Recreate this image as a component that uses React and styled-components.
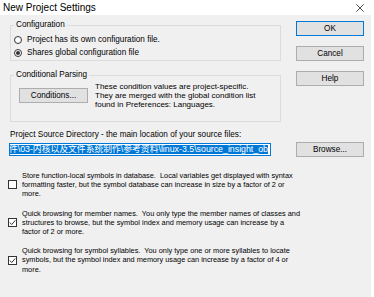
import React from "react";
import styled, { createGlobalStyle } from "styled-components";

const GlobalStyle = createGlobalStyle`
  html, body {
    margin: 0;
    padding: 0;
    background: #fff;
  }
  body {
    font-family: "Liberation Sans", Arial, sans-serif;
    font-size: 8.2px;
    color: #000;
  }
`;

const Window = styled.div`
  width: 371px;
  height: 297px;
  background: #f0f0f0;
  display: flex;
  flex-direction: column;
  overflow: hidden;
`;

const TitleBar = styled.div`
  height: 15px;
  flex: none;
  background: #fff;
  display: flex;
  align-items: center;
  justify-content: space-between;
  padding: 0 7px 0 3px;
  font-size: 10px;
`;

const Body = styled.div`
  padding: 0 7px 0 10px;
  display: flex;
  flex-direction: column;
`;

const TopRow = styled.div`
  display: flex;
  justify-content: space-between;
`;

const LeftCol = styled.div`
  width: 271px;
  padding-top: 5px;
  display: flex;
  flex-direction: column;
  gap: 9px;
`;

const RightCol = styled.div`
  padding-top: 6px;
  display: flex;
  flex-direction: column;
  gap: 10px;
`;

const Group = styled.fieldset`
  margin: 0;
  padding: 0;
  min-width: 0;
  border: 1px solid #dcdcdc;
`;

const Legend = styled.legend`
  margin-left: 3px;
  padding: 0 2px;
  line-height: 10px;
`;

const RadioList = styled.div`
  padding: 3px 0 1px 3px;
`;

const RadioRow = styled.label`
  display: flex;
  align-items: center;
  gap: 5px;
  height: 13px;
`;

const Radio = styled.span`
  width: 8px;
  height: 8px;
  flex: none;
  box-sizing: border-box;
  border: 1px solid #333;
  border-radius: 50%;
  background: #fff;
  display: flex;
  align-items: center;
  justify-content: center;
  &::after {
    content: "";
    display: ${(p) => (p.$checked ? "block" : "none")};
    width: 4px;
    height: 4px;
    border-radius: 50%;
    background: #333;
  }
`;

const ParsingRow = styled.div`
  display: flex;
  align-items: flex-start;
  gap: 7px;
  padding: 2px 0 12px 8px;
`;

const Button = styled.button`
  width: ${(p) => p.$w || 68}px;
  height: 15px;
  margin: ${(p) => p.$mt || 0}px 0 0;
  padding: 0;
  flex: none;
  box-sizing: border-box;
  background: #e1e1e1;
  border: 1px solid ${(p) => (p.$primary ? "#0078d7" : "#adadad")};
  font-family: "Liberation Sans", Arial, sans-serif;
  font-size: 8.2px;
  color: #000;
`;

const Note = styled.div`
  font-size: 8px;
  line-height: 9px;
  white-space: nowrap;
`;

const SourceLabel = styled.div`
  margin-top: 8px;
  line-height: 10px;
`;

const PathRow = styled.div`
  margin-top: 2px;
  display: flex;
  align-items: center;
  justify-content: space-between;
`;

const PathField = styled.div`
  width: 262px;
  height: 13px;
  margin-left: -1px;
  box-sizing: border-box;
  border: 1px solid #0078d7;
  background: #fff;
  padding: 0 2px 0 1px;
  overflow: hidden;
  display: flex;
  align-items: center;
  justify-content: flex-end;
`;

const Selection = styled.span`
  flex: none;
  background: #0078d7;
  color: #fff;
  white-space: nowrap;
  line-height: 9px;
  font-family: "Liberation Sans", "Noto Sans CJK SC", sans-serif;
  font-size: 8.8px;
`;

const Options = styled.div`
  margin-top: 14px;
  display: flex;
  flex-direction: column;
  gap: 10px;
`;

const Option = styled.label`
  margin-left: -2px;
  display: flex;
  align-items: center;
  gap: 5px;
`;

const Check = styled.span`
  width: 9px;
  height: 9px;
  flex: none;
  box-sizing: border-box;
  border: 1px solid #333;
  background: #fff;
  display: flex;
  align-items: center;
  justify-content: center;
`;

const OptionText = styled.div`
  font-size: 7.35px;
  line-height: 9.2px;
  white-space: pre;
`;

const CloseIcon = () => (
  <svg width="8" height="8" viewBox="0 0 8 8">
    <path d="M0.5 0.5L7.5 7.5M7.5 0.5L0.5 7.5" stroke="#222" strokeWidth="0.8" fill="none" />
  </svg>
);

const CheckBox = ({ checked }) => (
  <Check>
    {checked && (
      <svg width="7" height="7" viewBox="0 0 7 7">
        <path d="M0.8 3.6L2.7 5.5L6.3 1.4" stroke="#333" strokeWidth="1" fill="none" />
      </svg>
    )}
  </Check>
);

const options = [
  {
    checked: false,
    lines: [
      "Store function-local symbols in database.  Local variables get displayed with syntax",
      "formatting faster, but the symbol database can increase in size by a factor of 2 or",
      "more.",
    ],
  },
  {
    checked: true,
    lines: [
      "Quick browsing for member names.  You only type the member names of classes and",
      "structures to browse, but the symbol index and memory usage can increase by a",
      "factor of 2 or more.",
    ],
  },
  {
    checked: true,
    lines: [
      "Quick browsing for symbol syllables.  You only type one or more syllables to locate",
      "symbols, but the symbol index and memory usage can increase by a factor of 4 or",
      "more.",
    ],
  },
];

export default function App() {
  return (
    <>
      <GlobalStyle />
      <Window>
        <TitleBar>
          <span>New Project Settings</span>
          <CloseIcon />
        </TitleBar>
        <Body>
          <TopRow>
            <LeftCol>
              <Group>
                <Legend>Configuration</Legend>
                <RadioList>
                  <RadioRow>
                    <Radio />
                    Project has its own configuration file.
                  </RadioRow>
                  <RadioRow>
                    <Radio $checked />
                    Shares global configuration file
                  </RadioRow>
                </RadioList>
              </Group>
              <Group>
                <Legend>Conditional Parsing</Legend>
                <ParsingRow>
                  <Button $w={69} $mt={6}>Conditions...</Button>
                  <Note>
                    These condition values are project-specific.
                    <br />
                    They are merged with the global condition list
                    <br />
                    found in Preferences: Languages.
                  </Note>
                </ParsingRow>
              </Group>
            </LeftCol>
            <RightCol>
              <Button $primary>OK</Button>
              <Button>Cancel</Button>
              <Button>Help</Button>
            </RightCol>
          </TopRow>

          <SourceLabel>
            Project Source Directory - the main location of your source files:
          </SourceLabel>
          <PathRow>
            <PathField>
              <Selection>件\03-内核以及文件系统制作\参考资料\linux-3.5\source_insight_ob</Selection>
            </PathField>
            <Button>Browse...</Button>
          </PathRow>

          <Options>
            {options.map((o, i) => (
              <Option key={i}>
                <CheckBox checked={o.checked} />
                <OptionText>
                  {o.lines.map((l, j) => (
                    <div key={j}>{l}</div>
                  ))}
                </OptionText>
              </Option>
            ))}
          </Options>
        </Body>
      </Window>
    </>
  );
}
